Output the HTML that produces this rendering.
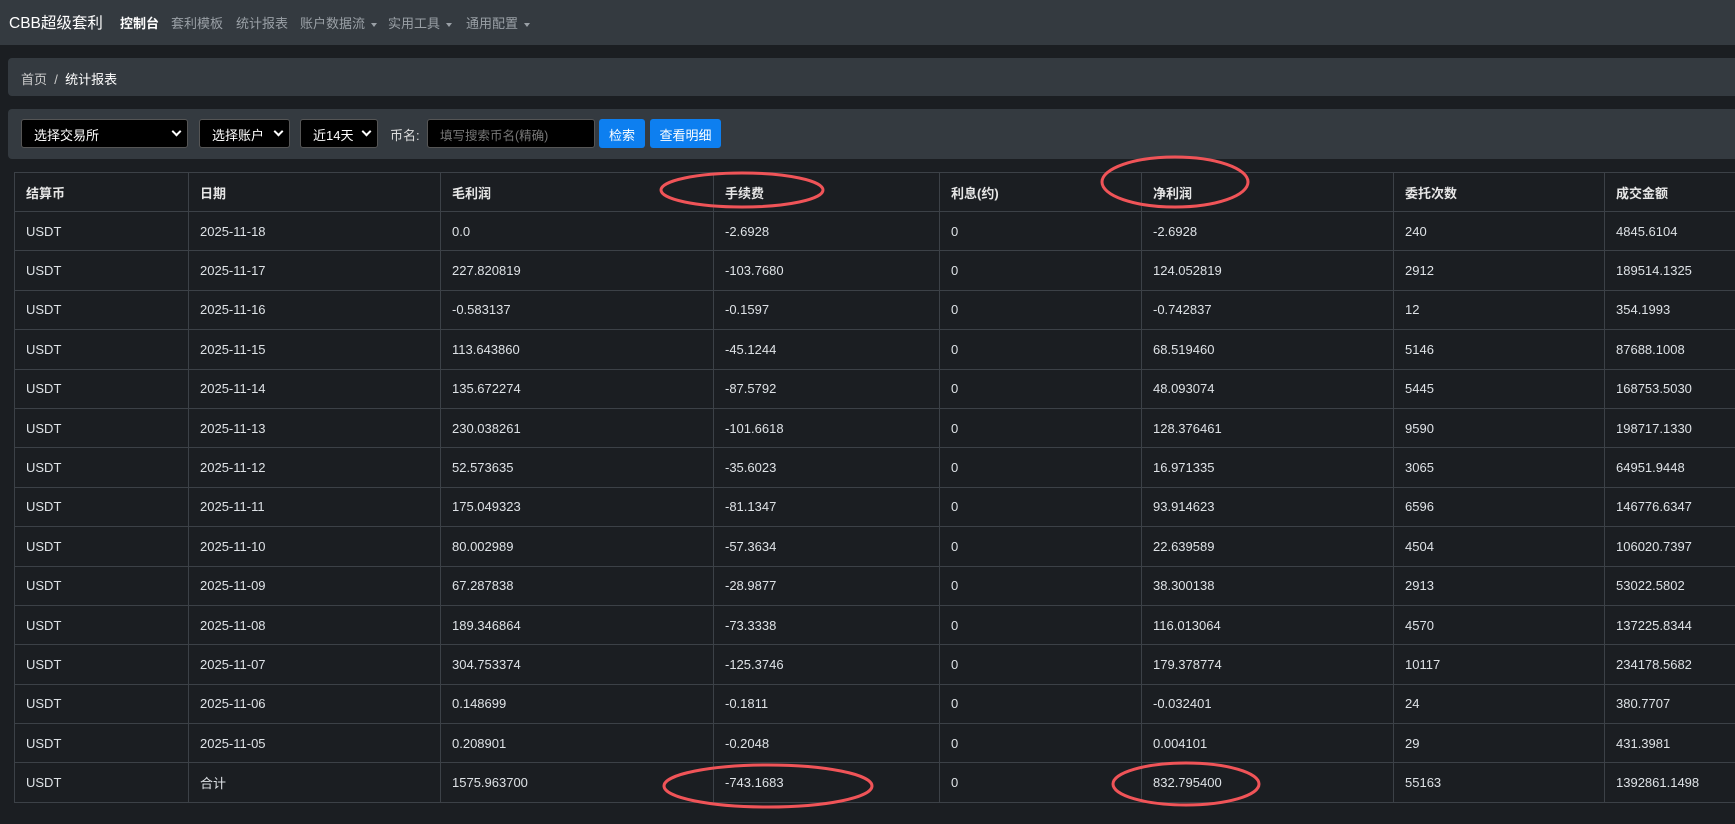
<!DOCTYPE html>
<html><head><meta charset="utf-8"><style>
*{box-sizing:border-box;margin:0;padding:0}
body{width:1735px;height:824px;overflow:hidden;background:#1b1e22;font-family:"Liberation Sans","Noto Sans CJK SC",sans-serif;color:#dee2e6;position:relative}
.nav{position:absolute;left:0;top:0;width:1735px;height:45px;background:#343a40;}
.nav span{position:absolute;top:13px;font-size:13px;color:#9aa0a6;white-space:nowrap}
.nav .brand{left:9px;top:11px;font-size:15.5px;color:#fff}
.nav .act{color:#fff;font-weight:bold}
.caret{display:inline-block;width:0;height:0;border-left:3.5px solid transparent;border-right:3.5px solid transparent;border-top:4px solid #9aa0a6;margin-left:6px;vertical-align:middle}
.bc{position:absolute;left:8px;top:58px;width:1727px;height:38px;background:#343a40;border-radius:4px 0 0 4px;font-size:13px;color:#ccc;padding:11px 0 0 13px}
.bc b{font-weight:normal;color:#fff}
.flt{position:absolute;left:8px;top:109px;width:1727px;height:50px;background:#343a40;border-radius:4px 0 0 4px}
.ctl{position:absolute;top:10px;height:29px;background:#000;border:1px solid #555;border-radius:3px;color:#fff;font-size:13px;padding:5px 0 0 12px}
.ctl i{position:absolute;right:7px;top:8px;width:7px;height:7px;border-right:2px solid #fff;border-bottom:2px solid #fff;transform:rotate(45deg)}
.btn{position:absolute;top:10px;height:29px;background:#0d7ff0;border-radius:3px;color:#fff;font-size:13px;padding:6px 0 0 0;text-align:center}
table{position:absolute;left:14px;top:172px;border-collapse:collapse;width:1740px;font-size:13px;background:#1b1e22;table-layout:fixed}
td,th{border:1px solid #3c4147;height:39.4px;padding:0 11px;text-align:left;white-space:nowrap}
th{height:39px;font-weight:bold;color:#e6e6e6}
svg{position:absolute;left:0;top:0}
</style></head><body>
<div class="nav">
<span class="brand">CBB超级套利</span>
<span class="act" style="left:120px">控制台</span>
<span style="left:171px">套利模板</span>
<span style="left:236px">统计报表</span>
<span style="left:300px">账户数据流<i class="caret"></i></span>
<span style="left:388px">实用工具<i class="caret"></i></span>
<span style="left:466px">通用配置<i class="caret"></i></span>
</div>
<div class="bc">首页 &nbsp;/&nbsp; <b>统计报表</b></div>
<div class="flt">
<div class="ctl" style="left:13px;width:167px">选择交易所<i></i></div>
<div class="ctl" style="left:191px;width:91px">选择账户<i></i></div>
<div class="ctl" style="left:292px;width:78px">近14天<i></i></div>
<span style="position:absolute;left:382px;top:16px;font-size:13px;color:#ddd">币名:</span>
<div class="ctl" style="left:419px;width:168px;color:#777;font-size:12.5px">填写搜索币名(精确)</div>
<div class="btn" style="left:591px;width:46px">检索</div>
<div class="btn" style="left:642px;width:71px">查看明细</div>
</div>
<table>
<colgroup><col style="width:174px"><col style="width:252px"><col style="width:273px"><col style="width:226px"><col style="width:202px"><col style="width:252px"><col style="width:211px"><col style="width:150px"></colgroup>
<tr><th>结算币</th><th>日期</th><th>毛利润</th><th>手续费</th><th>利息(约)</th><th>净利润</th><th>委托次数</th><th>成交金额</th></tr>
<tr><td>USDT</td><td>2025-11-18</td><td>0.0</td><td>-2.6928</td><td>0</td><td>-2.6928</td><td>240</td><td>4845.6104</td></tr>
<tr><td>USDT</td><td>2025-11-17</td><td>227.820819</td><td>-103.7680</td><td>0</td><td>124.052819</td><td>2912</td><td>189514.1325</td></tr>
<tr><td>USDT</td><td>2025-11-16</td><td>-0.583137</td><td>-0.1597</td><td>0</td><td>-0.742837</td><td>12</td><td>354.1993</td></tr>
<tr><td>USDT</td><td>2025-11-15</td><td>113.643860</td><td>-45.1244</td><td>0</td><td>68.519460</td><td>5146</td><td>87688.1008</td></tr>
<tr><td>USDT</td><td>2025-11-14</td><td>135.672274</td><td>-87.5792</td><td>0</td><td>48.093074</td><td>5445</td><td>168753.5030</td></tr>
<tr><td>USDT</td><td>2025-11-13</td><td>230.038261</td><td>-101.6618</td><td>0</td><td>128.376461</td><td>9590</td><td>198717.1330</td></tr>
<tr><td>USDT</td><td>2025-11-12</td><td>52.573635</td><td>-35.6023</td><td>0</td><td>16.971335</td><td>3065</td><td>64951.9448</td></tr>
<tr><td>USDT</td><td>2025-11-11</td><td>175.049323</td><td>-81.1347</td><td>0</td><td>93.914623</td><td>6596</td><td>146776.6347</td></tr>
<tr><td>USDT</td><td>2025-11-10</td><td>80.002989</td><td>-57.3634</td><td>0</td><td>22.639589</td><td>4504</td><td>106020.7397</td></tr>
<tr><td>USDT</td><td>2025-11-09</td><td>67.287838</td><td>-28.9877</td><td>0</td><td>38.300138</td><td>2913</td><td>53022.5802</td></tr>
<tr><td>USDT</td><td>2025-11-08</td><td>189.346864</td><td>-73.3338</td><td>0</td><td>116.013064</td><td>4570</td><td>137225.8344</td></tr>
<tr><td>USDT</td><td>2025-11-07</td><td>304.753374</td><td>-125.3746</td><td>0</td><td>179.378774</td><td>10117</td><td>234178.5682</td></tr>
<tr><td>USDT</td><td>2025-11-06</td><td>0.148699</td><td>-0.1811</td><td>0</td><td>-0.032401</td><td>24</td><td>380.7707</td></tr>
<tr><td>USDT</td><td>2025-11-05</td><td>0.208901</td><td>-0.2048</td><td>0</td><td>0.004101</td><td>29</td><td>431.3981</td></tr>
<tr><td>USDT</td><td>合计</td><td>1575.963700</td><td>-743.1683</td><td>0</td><td>832.795400</td><td>55163</td><td>1392861.1498</td></tr>
</table>
<svg width="1735" height="824" fill="none" stroke="#f05458" stroke-width="3">
<ellipse cx="742" cy="190" rx="81" ry="17"/>
<ellipse cx="1175" cy="182" rx="73" ry="25"/>
<ellipse cx="768" cy="786" rx="104" ry="21"/>
<ellipse cx="1186" cy="784" rx="73" ry="21"/>
</svg>
</body></html>
